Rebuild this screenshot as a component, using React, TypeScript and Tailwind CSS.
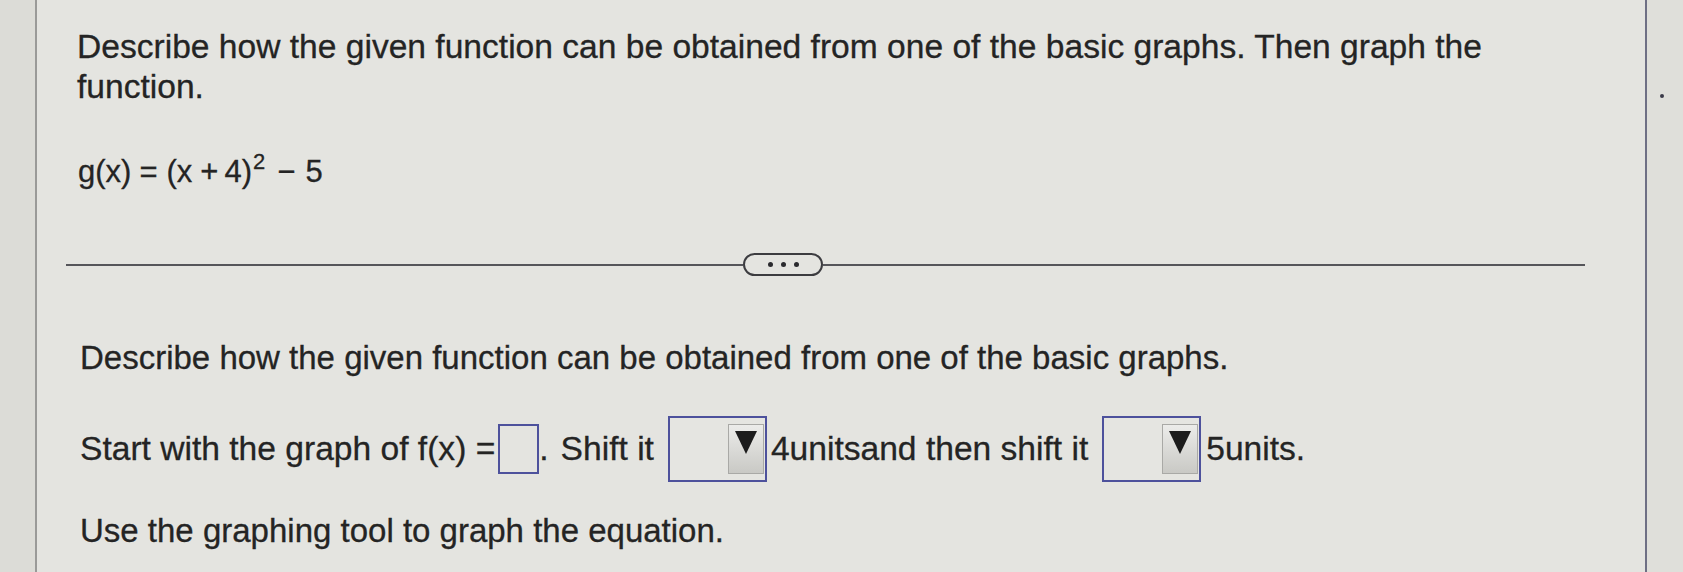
import React from "react";

const font = { fontFamily: '"Liberation Sans", Arial, sans-serif' };

function Dropdown() {
  return (
    <div className="flex h-[66px] w-[99px] items-center justify-end border-2 border-[#4d519c] bg-[#e5e5e1] pr-[1px]">
      <div className="flex h-[50px] w-[36px] flex-col items-center border border-[#a9a9a6] bg-gradient-to-b from-[#ececea] to-[#c9c9c5] pt-[6px]">
        <svg width="22" height="23" viewBox="0 0 22 23">
          <polygon points="0,0 22,0 11,23" fill="#1c1c1c" />
        </svg>
      </div>
    </div>
  );
}

export default function App() {
  return (
    <div
      className="flex h-[572px] w-[1683px] overflow-hidden bg-[#dfdfda] text-[#242424] [-webkit-text-stroke:0.3px_#242424]"
      style={font}
    >
      <div className="w-[35px] shrink-0 bg-[#dcdcd7]" />
      <div className="flex w-[1612px] shrink-0 flex-col border-x-2 border-l-[#9a9a98] border-r-[#6e6f84] bg-[#e4e4e0]">
        <div className="pl-[40px] pt-[27px] text-[33.6px] leading-[40px]">
          <p>Describe how the given function can be obtained from one of the basic graphs. Then graph the</p>
          <p>function.</p>
        </div>
        <div className="mt-[47px] flex items-baseline pl-[41px] text-[31px] leading-[36px]">
          <span>g(x)</span>
          <span className="ml-[8px]">=</span>
          <span className="ml-[9px]">(x</span>
          <span className="ml-[8px]">+</span>
          <span className="ml-[6px]">4)</span>
          <span className="relative -top-[13px] ml-[1px] text-[22px] leading-[22px]">2</span>
          <span className="ml-[12px]">−</span>
          <span className="ml-[10px]">5</span>
        </div>
        <div className="ml-[29px] mt-[63px] flex h-[23px] w-[1519px] items-center">
          <div className="h-[2px] w-[677px] bg-[#55555a]" />
          <div className="flex h-[23px] w-[80px] items-center justify-center gap-[8px] rounded-full border-2 border-[#3c3c40]">
            <span className="h-[5px] w-[5px] rounded-full bg-[#2a2a2e]" />
            <span className="h-[5px] w-[5px] rounded-full bg-[#2a2a2e]" />
            <span className="h-[5px] w-[5px] rounded-full bg-[#2a2a2e]" />
          </div>
          <div className="h-[2px] flex-1 bg-[#55555a]" />
        </div>
        <p className="mt-[62px] pl-[43px] text-[33px] leading-[40px]">
          Describe how the given function can be obtained from one of the basic graphs.
        </p>
        <div className="mt-[38px] flex h-[66px] items-center pl-[43px] text-[33.6px] leading-[40px]">
          <span>Start with the graph of f(x) =</span>
          <div className="ml-[3px] h-[50px] w-[41px] border-2 border-[#4d519c]" />
          <span>.</span>
          <span className="ml-[12px]">Shift it</span>
          <div className="ml-[14px]">
            <Dropdown />
          </div>
          <span className="ml-[4px]">4unitsand then shift it</span>
          <div className="ml-[14px]">
            <Dropdown />
          </div>
          <span className="ml-[5px]">5units.</span>
        </div>
        <p className="mt-[29px] pl-[43px] text-[33px] leading-[40px]">
          Use the graphing tool to graph the equation.
        </p>
      </div>
      <div className="relative flex-1 bg-[#dfdfda]">
        <span className="absolute left-[13px] top-[94px] h-[4px] w-[4px] rounded-full bg-[#3a3a48]" />
      </div>
    </div>
  );
}
